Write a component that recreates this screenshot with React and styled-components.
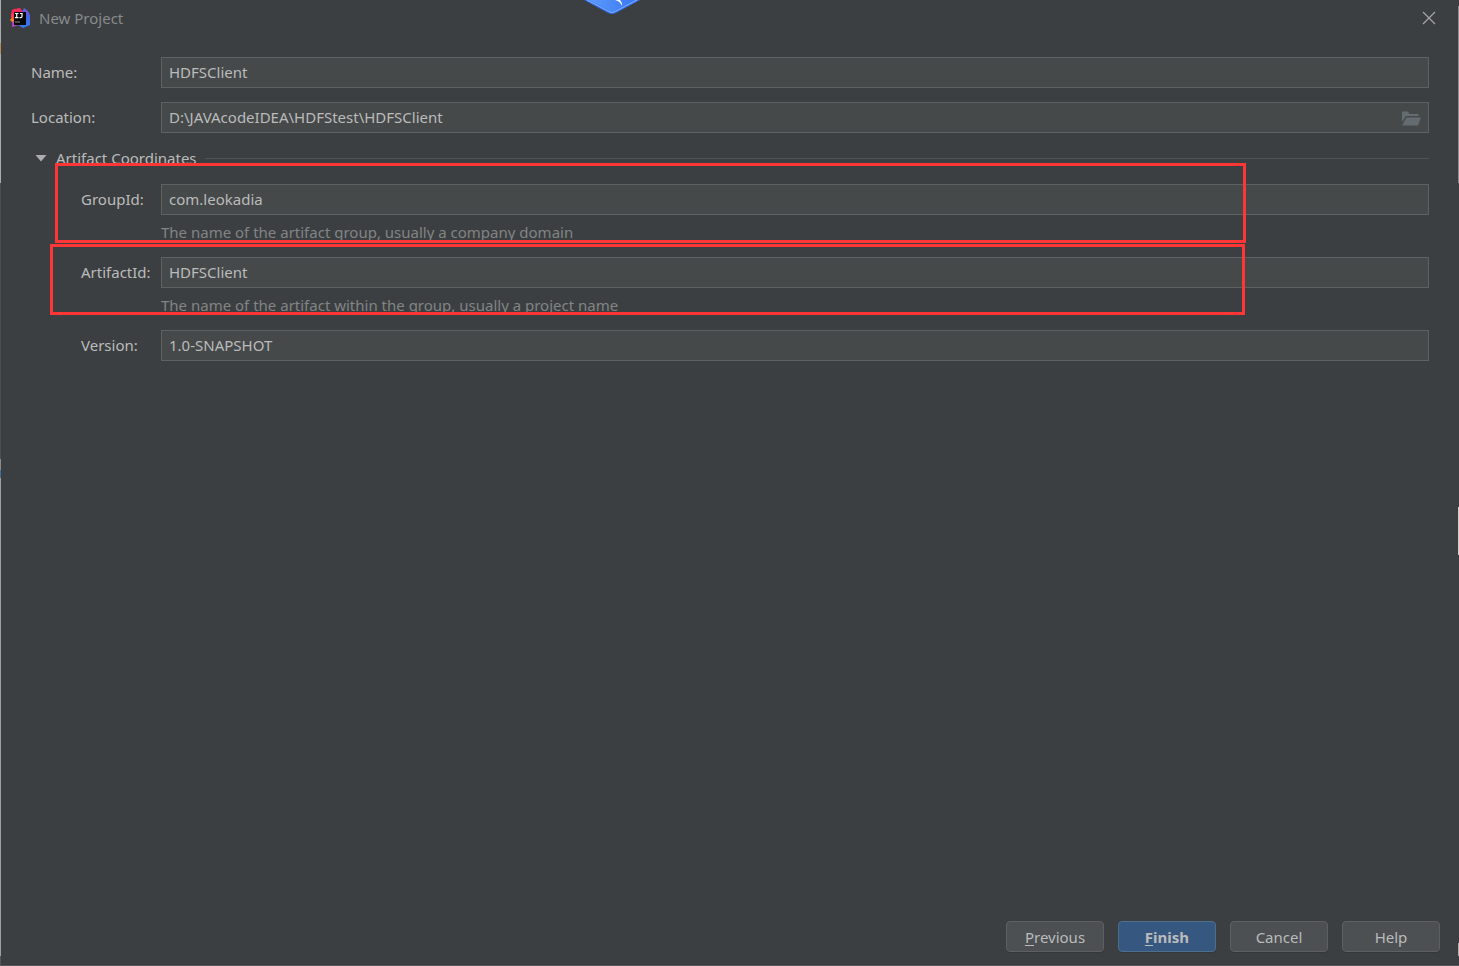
import React, {useState} from "react"
import styled, {createGlobalStyle, css} from "styled-components"

const GlobalStyle = createGlobalStyle`
  * {
    box-sizing: border-box;
  }

  body {
    margin: 0;
    background-color: #3c3f41;
    color: #bbbbbb;
    font-family: "Noto Sans", "Open Sans", sans-serif;
    font-size: 15px;
    line-height: 20px;
  }
`

const LogoIcon = () => (
    <svg width="20" height="20" viewBox="0 0 20 20" aria-hidden="true">
        <defs>
            <linearGradient id="logoRed" x1="0" y1="1" x2="1" y2="0">
                <stop offset="0" stopColor="#fc6a3d"/>
                <stop offset="0.400" stopColor="#fe2857"/>
                <stop offset="1" stopColor="#e8305f"/>
            </linearGradient>
            <linearGradient id="logoBlue" x1="0" y1="0" x2="0" y2="1">
                <stop offset="0" stopColor="#7a55d8"/>
                <stop offset="0.450" stopColor="#4863e6"/>
                <stop offset="1" stopColor="#2f7df0"/>
            </linearGradient>
        </defs>
        <path d="M0 12 L4 7 L8 12 L3 15 Z" fill="#fc801d"/>
        <path d="M2 19 L2.500 14 L6 11 L12 16 Z" fill="#c23fd8"/>
        <path d="M1 7 L2 2 L4 1 L10 0 L13 4 L11 9 L4 12 L1 9 Z" fill="url(#logoRed)"/>
        <path d="M12 4 L14 0 L18 3 L20 7 L20 17 L13 20 L8 17 L13 9 Z" fill="url(#logoBlue)"/>
        <rect x="4" y="4" width="12" height="13" fill="#080808"/>
        <path d="M5 5.500 H8.500 M6.700 5.500 V9.500 M5 9.700 H8.500 M10 5.500 H12 V8.500 Q12 9.700 10.800 9.700 H9.500"
              fill="none" stroke="#fff" strokeWidth="1.200"/>
        <path d="M5 14 H10" stroke="#8c8c8c" strokeWidth="1"/>
    </svg>
)

const CloseIcon = () => (
    <svg width="14" height="14" viewBox="0 0 14 14" aria-hidden="true">
        <path d="M1 1 L13 13 M13 1 L1 13" stroke="#a5a7a8" strokeWidth="1.200"/>
    </svg>
)

const FolderIcon = () => (
    <svg width="20" height="15" viewBox="0 0 20 15" aria-hidden="true">
        <path d="M1 11 V0.500 H7 L8.500 3 H17.500 V5 H5 Z" fill="#646c70"/>
        <path d="M5.500 6.500 H20 L17 14.500 H1 Z" fill="#646c70"/>
    </svg>
)

const ArrowIcon = () => (
    <svg width="12" height="8" viewBox="0 0 12 8" aria-hidden="true">
        <path d="M0.500 1 H11.500 L6 7.500 Z" fill="#adadad"/>
    </svg>
)

const BirdBadge = () => (
    <svg width="60" height="14" viewBox="0 0 60 14" aria-hidden="true">
        <defs>
            <linearGradient id="badgeFill" x1="0" y1="0" x2="1" y2="0">
                <stop offset="0" stopColor="#5c9bfc"/>
                <stop offset="1" stopColor="#3a78f2"/>
            </linearGradient>
        </defs>
        <path d="M8 0 H64 L40 13 Q36 15 32 13 Z" fill="#2f6df0"/>
        <path d="M13 0 H59 L38 11 Q36 12 34 11 Z" fill="url(#badgeFill)"/>
        <path d="M11 0 L33 11.500 Q36 13.200 39 11.500 L61 0" fill="none" stroke="#78abfc" strokeWidth="1.200"/>
        <path d="M39 0 Q44 1 46 6 Q46 2 44 0 Z" fill="#fff"/>
    </svg>
)

const Field = ({id, label, value, hint, nested, framed, icon}) => {
    const [text, setText] = useState(value)

    return (
        <FieldRow>
            {framed && <Highlight wide={framed === "artifact"}/>}
            <Label htmlFor={id} nested={nested}>{label}</Label>
            <FieldBody>
                <TextInput id={id} value={text} spellCheck={false}
                           aria-describedby={hint ? `${id}-hint` : undefined}
                           onChange={(e) => setText(e.target.value)}/>
                {icon && (
                    <BrowseButton type="button" aria-label="Browse">
                        {icon}
                    </BrowseButton>
                )}
                {hint && <Hint id={`${id}-hint`}>{hint}</Hint>}
            </FieldBody>
        </FieldRow>
    )
}

const App = () => {
    const [isOpen, setIsOpen] = useState(true)

    return (
        <Dialog>
            <GlobalStyle/>
            <LeftEdge/>
            <RightEdge/>
            <Badge><BirdBadge/></Badge>
            <TitleBar>
                <LogoIcon/>
                <Title>New Project</Title>
                <CloseButton type="button" aria-label="Close"><CloseIcon/></CloseButton>
            </TitleBar>
            <Form>
                <Field id="name" label="Name:" value="HDFSClient"/>
                <Field id="location" label="Location:" value="D:\JAVAcodeIDEA\HDFStest\HDFSClient"
                       icon={<FolderIcon/>}/>
                <SectionHeader>
                    <SectionToggle type="button" aria-expanded={isOpen} onClick={() => setIsOpen(!isOpen)}>
                        <ArrowIcon/>
                        Artifact Coordinates
                    </SectionToggle>
                    <Rule/>
                </SectionHeader>
                {isOpen && (
                    <>
                        <Field id="group" label="GroupId:" value="com.leokadia" nested framed="group"
                               hint="The name of the artifact group, usually a company domain"/>
                        <Field id="artifact" label="ArtifactId:" value="HDFSClient" nested framed="artifact"
                               hint="The name of the artifact within the group, usually a project name"/>
                        <Field id="version" label="Version:" value="1.0-SNAPSHOT" nested/>
                    </>
                )}
            </Form>
            <Footer>
                <Button type="button"><u>P</u>revious</Button>
                <Button type="button" primary><u>F</u>inish</Button>
                <Button type="button">Cancel</Button>
                <Button type="button">Help</Button>
            </Footer>
        </Dialog>
    )
}

const Dialog = styled.main`
  position: relative;
  display: flex;
  flex-direction: column;
  min-height: 100vh;
  background-color: #3c3f41;
  border-bottom: 1px solid #555758;
`

const edge = css`
  position: absolute;
  top: 0;
  bottom: 0;
  width: 1px;
`

const LeftEdge = styled.div`
  ${edge};
  left: 0;
  background: linear-gradient(#a9abac 0 43px, #b08d5b 43px 54px, #a9abac 54px 183px, #4b4e50 183px 459px,
    #8a8c8d 459px 470px, #3f6f9c 470px 478px, #a0a0a0 478px 956px, #555758 956px);
`

const RightEdge = styled.div`
  ${edge};
  right: 0;
  background: linear-gradient(#3c3f41 0 6px, #8b8d8e 6px 183px, #3c3f41 183px 507px, #d0d0d0 507px 555px,
    #3c3f41 555px 943px, #b0b0b0 943px 956px, #3c3f41 956px);
`

const Badge = styled.div`
  position: absolute;
  top: 0;
  left: calc(42% - 37px);
  height: 14px;
  display: flex;

  svg {
    overflow: visible;
  }
`

const TitleBar = styled.header`
  display: flex;
  align-items: center;
  height: 36px;
  padding: 0 23px 0 10px;
`

const Title = styled.h1`
  flex: 1;
  margin: 0 0 0 9px;
  font-size: 15px;
  font-weight: 400;
  color: #888a8b;
`

const iconButton = css`
  display: flex;
  padding: 0;
  border: 0;
  background: none;
  color: inherit;
  font: inherit;
`

const CloseButton = styled.button`
  ${iconButton};
`

const Form = styled.form`
  flex: 1;
  display: flex;
  flex-direction: column;
  gap: 14px;
  padding: 21px 30px 0 31px;
`

const FieldRow = styled.div`
  position: relative;
  display: flex;
  align-items: flex-start;
`

const Label = styled.label.withConfig({shouldForwardProp: (prop) => prop !== "nested"})`
  flex: 0 0 130px;
  padding-left: ${({nested}) => (nested ? 50 : 0)}px;
  line-height: 30px;
  white-space: nowrap;
`

const FieldBody = styled.div`
  position: relative;
  flex: 1;
  display: flex;
  flex-direction: column;
`

const TextInput = styled.input`
  width: 100%;
  height: 31px;
  padding: 0 7px 1px;
  border: 1px solid #5e6162;
  border-radius: 0;
  outline: 0;
  background-color: #45494a;
  color: #bbbbbb;
  font: inherit;
`

const BrowseButton = styled.button`
  ${iconButton};
  position: absolute;
  right: 8px;
  top: 9px;
`

const Hint = styled.p`
  height: 20px;
  margin: 8px 0 0;
  line-height: 18px;
  color: #828485;
`

const Highlight = styled.div.withConfig({shouldForwardProp: (prop) => prop !== "wide"})`
  position: absolute;
  z-index: 1;
  top: ${({wide}) => (wide ? -13 : -21)}px;
  bottom: ${({wide}) => (wide ? 1 : 0)}px;
  left: ${({wide}) => (wide ? 19 : 24)}px;
  right: ${({wide}) => (wide ? 184 : 183)}px;
  border: 3px solid #ff3636;
  pointer-events: none;
`

const SectionHeader = styled.div`
  display: flex;
  align-items: center;
  gap: 8px;
  height: 23px;
  padding-bottom: 1px;
`

const SectionToggle = styled.button`
  ${iconButton};
  align-items: center;
  gap: 9px;
  padding-left: 4px;
`

const Rule = styled.div`
  flex: 1;
  height: 1px;
  background-color: #515456;
`

const Footer = styled.footer`
  display: flex;
  justify-content: flex-end;
  gap: 14px;
  padding: 0 19px 13px;
`

const Button = styled.button.withConfig({shouldForwardProp: (prop) => prop !== "primary"})`
  width: 98px;
  height: 31px;
  padding: 1px 0 0;
  border: 1px solid ${({primary}) => (primary ? "#4c708c" : "#5e6060")};
  border-radius: 4px;
  background-color: ${({primary}) => (primary ? "#365880" : "#4c5052")};
  box-shadow: 0 1px 0 #35383a;
  color: #bbbbbb;
  font: inherit;
  font-weight: ${({primary}) => (primary ? 700 : 400)};

  u {
    text-underline-offset: 2px;
  }
`

export default App
